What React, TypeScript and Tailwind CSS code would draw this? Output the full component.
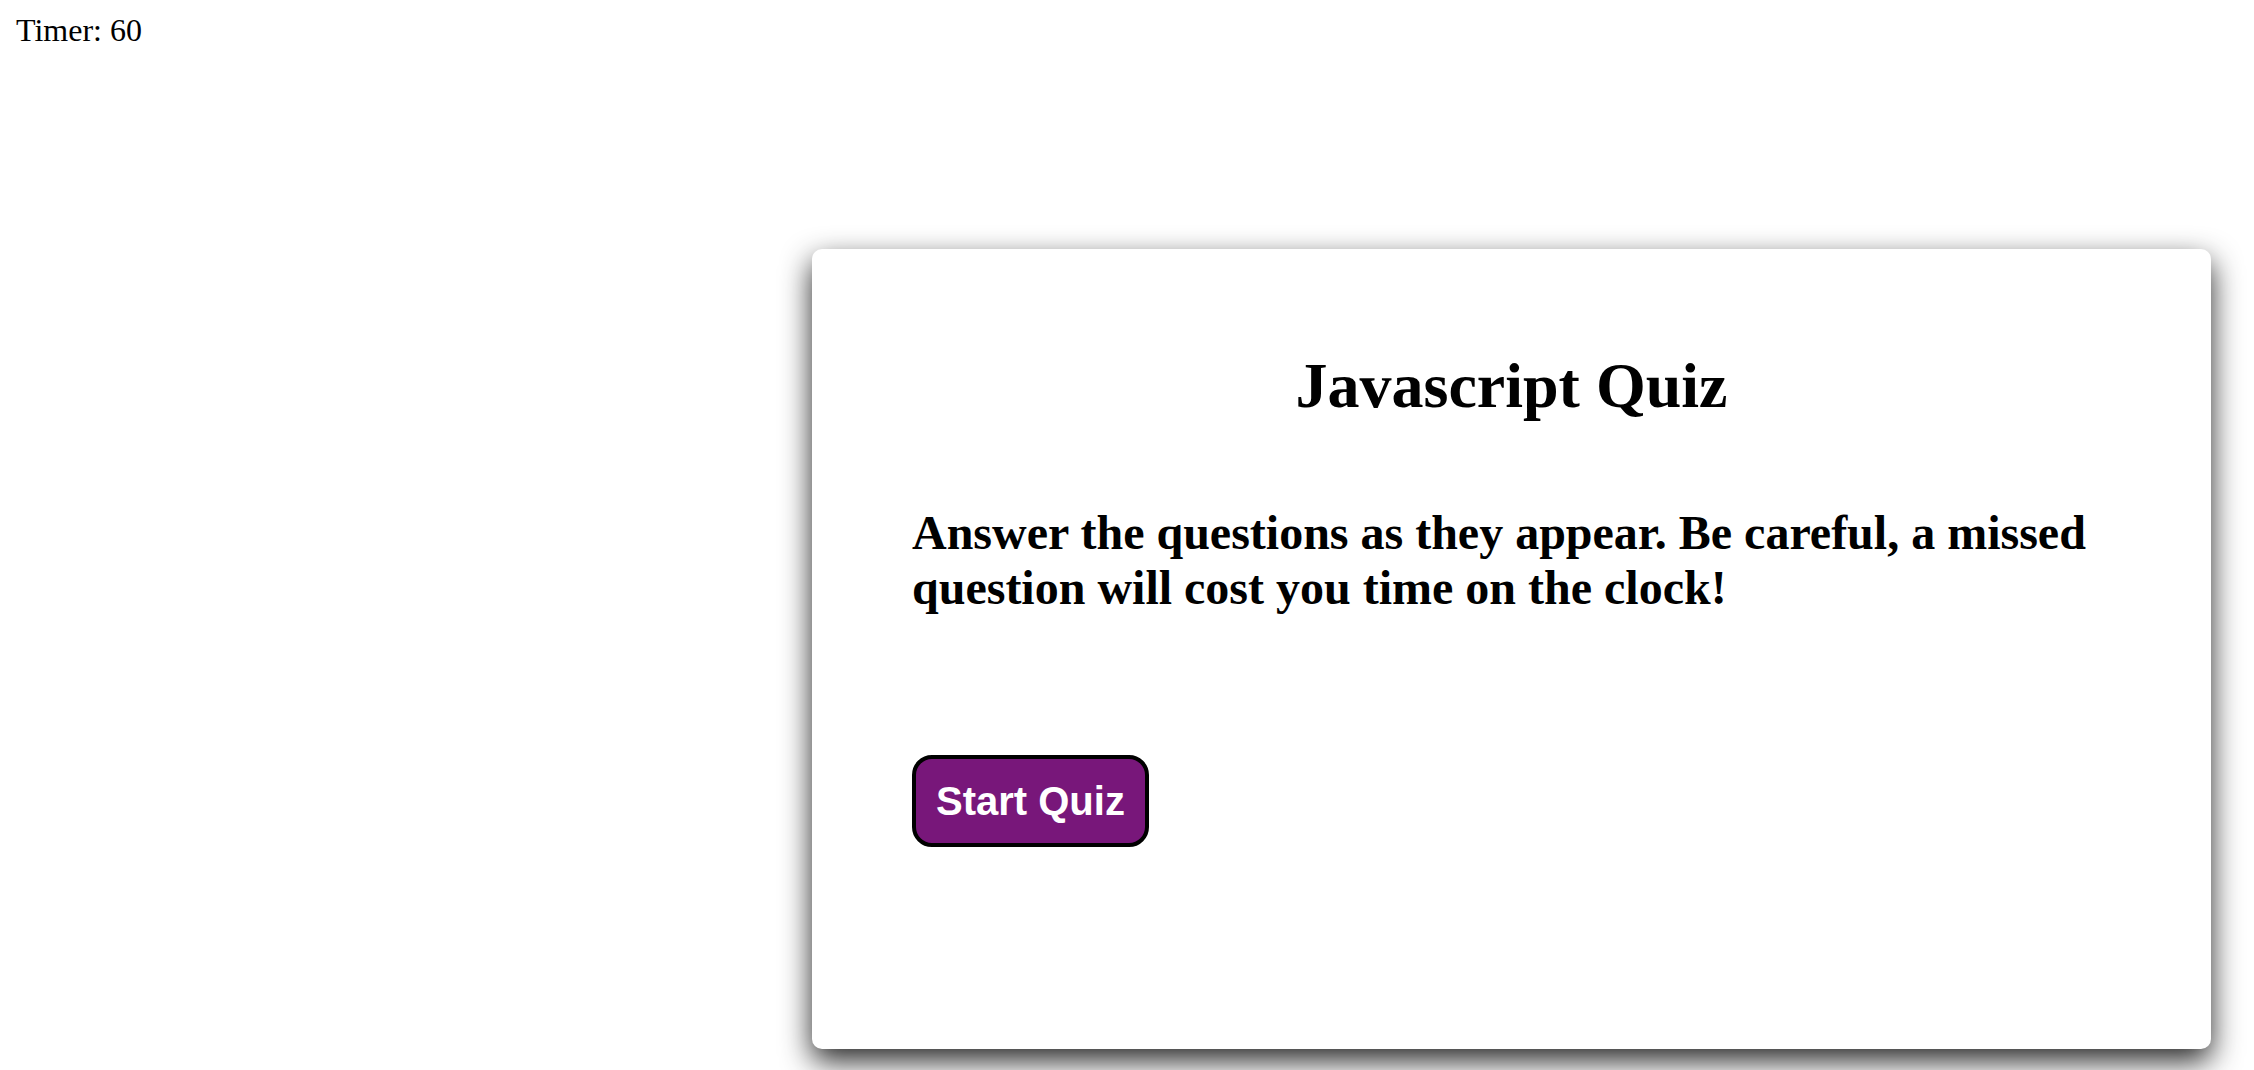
import React from "react";

export default function App() {
  return (
    <div className="min-h-[1070px] w-[2254px] bg-white text-black font-['Liberation_Serif',serif]">
      <div className="pt-[12px] pl-[16px] text-[32px] leading-[37px]">Timer: 60</div>
      <div className="ml-[812px] mt-[200px] w-[1399px] h-[800px] rounded-[10px] bg-white shadow-[0_12px_30px_rgba(0,0,0,0.85)] pt-[100px] pl-[100px] pr-[100px] flex flex-col items-start">
        <h1 className="w-full text-center text-[64px] leading-[74px] font-bold">Javascript Quiz</h1>
        <h2 className="mt-[82px] text-[48px] leading-[55px] font-bold">
          Answer the questions as they appear. Be careful, a missed question will cost you time on the clock!
        </h2>
        <button className="mt-[140px] rounded-[20px] border-[4px] border-black bg-[#78177a] px-[20px] py-[19px] text-[40px] leading-[46px] font-bold text-white font-['Liberation_Sans',Arial,sans-serif]">
          Start Quiz
        </button>
      </div>
    </div>
  );
}
